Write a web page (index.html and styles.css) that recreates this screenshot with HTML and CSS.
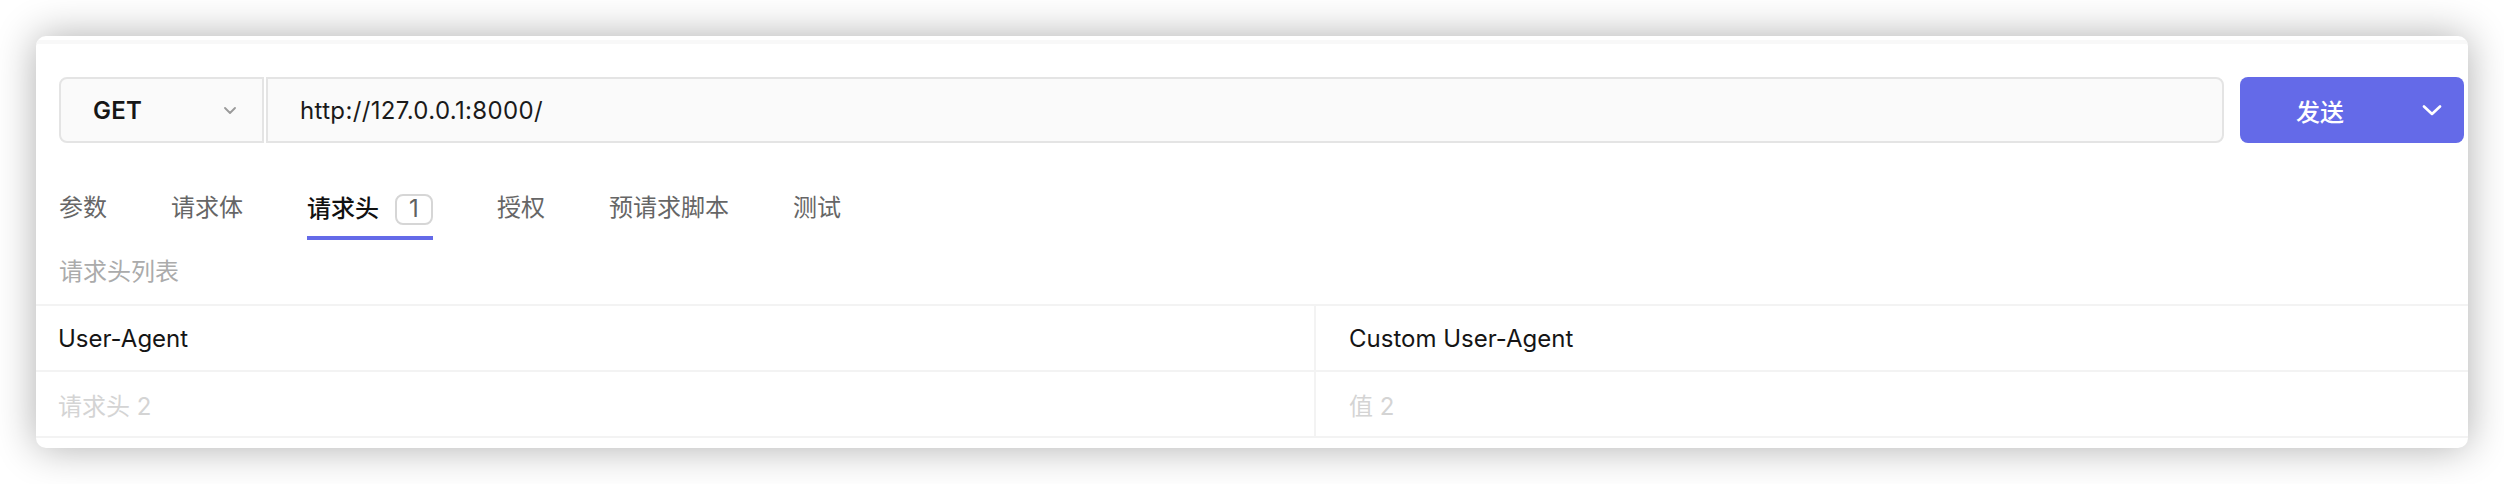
FILE: index.html
```html
<!DOCTYPE html>
<html lang="zh-CN">
<head>
<meta charset="utf-8">
<title>请求</title>
<link rel="stylesheet" href="styles.css">
</head>
<body>
<div class="card">
  <div class="strip"></div>
  <div class="request-bar">
    <div class="method">
      <span class="method-text">GET</span>
      <svg class="method-chev" width="12" height="7" viewBox="0 0 12 7"><polyline points="1,1 6,6 11,1" fill="none" stroke="#9a9a9a" stroke-width="1.8" stroke-linecap="round" stroke-linejoin="round"/></svg>
    </div>
    <div class="url">http://127.0.0.1:8000/</div>
    <div class="send">
      <span class="send-main">发送</span>
      <span class="send-drop">
        <svg width="20" height="11" viewBox="0 0 20 11"><polyline points="2,1.5 10,9 18,1.5" fill="none" stroke="#ffffff" stroke-width="2.6" stroke-linecap="round" stroke-linejoin="round"/></svg>
      </span>
    </div>
  </div>
  <div class="tabs">
    <div class="tab">参数</div>
    <div class="tab">请求体</div>
    <div class="tab active">请求头<span class="badge">1</span></div>
    <div class="tab">授权</div>
    <div class="tab">预请求脚本</div>
    <div class="tab">测试</div>
  </div>
  <div class="section-label">请求头列表</div>
  <div class="table">
    <div class="row">
      <div class="cell key">User-Agent</div>
      <div class="cell val">Custom User-Agent</div>
    </div>
    <div class="row">
      <div class="cell key placeholder">请求头 2</div>
      <div class="cell val placeholder">值 2</div>
    </div>
  </div>
</div>
</body>
</html>
```
FILE: styles.css
```css
* { box-sizing: border-box; }
html, body { margin: 0; background: #ffffff; }
body {
  padding: 36px 36px 36px 36px;
  font-family: Inter, "Noto Sans CJK SC", sans-serif;
  color: #151515;
}
.card {
  width: 2432px;
  height: 412px;
  background: #ffffff;
  border-radius: 10px;
  box-shadow: 0 0 40px rgba(0, 0, 0, 0.32);
  overflow: hidden;
}
.strip {
  height: 4px;
  margin-top: 4px;
  background: #f8f8f8;
}
.request-bar {
  display: flex;
  margin: 33px 4px 0 23px;
  height: 66px;
}
.method {
  width: 205px;
  display: flex;
  align-items: center;
  justify-content: space-between;
  padding: 0 26px 0 32px;
  background: #fafafa;
  border: 2px solid #e4e4e4;
  border-radius: 8px 0 0 8px;
}
.method-text {
  font-size: 24px;
  font-weight: 600;
  letter-spacing: 0.3px;
  color: #161616;
}
.method-chev { display: block; }
.url {
  flex: 1;
  display: flex;
  align-items: center;
  padding-left: 32px;
  font-size: 24px;
  letter-spacing: 0.35px;
  color: #1a1a1a;
  background: #fafafa;
  border: 2px solid #e4e4e4;
  border-radius: 0 8px 8px 0;
  margin-left: 2px;
}
.send {
  width: 224px;
  margin-left: 16px;
  display: flex;
  background: #646ae8;
  border-radius: 8px;
  color: #ffffff;
}
.send-main {
  width: 160px;
  display: flex;
  align-items: center;
  justify-content: center;
  font-size: 24px;
  font-weight: 500;
}
.send-drop {
  flex: 1;
  display: flex;
  align-items: center;
  justify-content: center;
}
.send-drop svg { display: block; }
.tabs {
  display: flex;
  gap: 64px;
  margin: 50px 0 0 23px;
}
.tab {
  display: flex;
  align-items: center;
  height: 47px;
  padding-bottom: 14px;
  line-height: 32px;
  font-size: 24px;
  color: #666666;
  border-bottom: 4px solid transparent;
}
.tab.active {
  color: #111111;
  font-weight: 500;
  border-bottom-color: #646ae8;
  padding-bottom: 11px;
}
.badge {
  margin-left: 16px;
  width: 38px;
  height: 31px;
  display: inline-flex;
  align-items: center;
  justify-content: center;
  border: 2px solid #d6d6d6;
  border-radius: 8px;
  font-size: 24px;
  font-weight: 400;
  color: #606060;
}
.section-label {
  margin: 16px 0 0 23px;
  line-height: 32px;
  font-size: 24px;
  color: #ababab;
}
.table {
  margin-top: 16px;
  border-top: 2px solid #f3f3f3;
}
.row {
  display: grid;
  grid-template-columns: 1278px 1fr;
  height: 66px;
  border-bottom: 2px solid #f3f3f3;
}
.cell {
  display: flex;
  align-items: center;
  font-size: 24px;
  color: #151515;
}
.cell.key { padding-left: 22px; }
.cell.val {
  padding-left: 33px;
  border-left: 2px solid #f3f3f3;
}
.cell.placeholder { color: #d4d4d4; }
```
